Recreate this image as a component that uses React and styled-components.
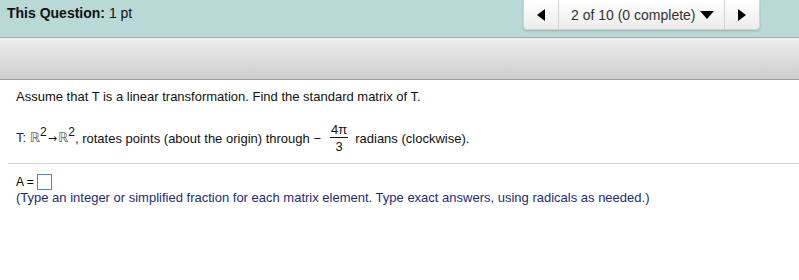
import React from 'react';
import styled, { createGlobalStyle } from 'styled-components';

const GlobalStyle = createGlobalStyle`
  body {
    margin: 0;
    background: #fff;
    font-family: "Liberation Sans", Arial, sans-serif;
    color: #000;
  }
`;

const Header = styled.div`
  height: 37px;
  background: #b9d9d6;
  border-bottom: 1px solid #a3a9a8;
  display: flex;
  justify-content: space-between;
  align-items: flex-start;
  padding: 0 39px 0 7px;
`;

const Title = styled.div`
  padding-top: 5px;
  font-size: 14px;
  line-height: 17px;
  color: #111;

  b {
    font-weight: bold;
  }
`;

const Nav = styled.div`
  display: flex;
  height: 29px;
  border: 1px solid #cfd3d3;
  border-top: none;
  border-radius: 0 0 4px 4px;
  box-shadow: 0 1px 2px rgba(0, 0, 0, 0.18);
  background: linear-gradient(#ffffff, #ececec);
  overflow: hidden;
`;

const NavButton = styled.div`
  width: ${p => p.$w}px;
  display: flex;
  align-items: center;
  justify-content: ${p => (p.$center ? 'center' : 'flex-start')};
  padding-left: ${p => (p.$center ? 0 : 12)}px;
  box-sizing: border-box;
  border-left: ${p => (p.$divided ? '1px solid #d3d3d3' : 'none')};
  border-right: ${p => (p.$divided ? '1px solid #d3d3d3' : 'none')};
  font-size: 14px;
  color: #333;
  gap: 4px;
`;

const Arrow = styled.span`
  width: 0;
  height: 0;
  border-top: 6px solid transparent;
  border-bottom: 6px solid transparent;
  ${p => (p.$dir === 'left' ? 'border-right: 8px solid #000;' : 'border-left: 8px solid #000;')}
`;

const Caret = styled.span`
  width: 0;
  height: 0;
  border-left: 7px solid transparent;
  border-right: 7px solid transparent;
  border-top: 8px solid #000;
`;

const Toolbar = styled.div`
  height: 41px;
  background: linear-gradient(#efefef, #cdcdcd);
  border-bottom: 1px solid #9c9c9c;
`;

const Content = styled.div`
  padding-left: 8px;
`;

const Question = styled.div`
  padding: 9px 8px 9px 8px;
  font-size: 13px;
  color: #111;
`;

const Line = styled.p`
  margin: 0;
  margin-top: ${p => p.$top || 0}px;
  line-height: 16px;
  display: flex;
  align-items: center;
  white-space: pre;
`;

const MathExpr = styled.span`
  display: inline-block;
  white-space: pre;
`;

const MathT = styled.span`
  color: #1e2a52;
`;

const Reals = styled.span`
  font-family: "DejaVu Sans", sans-serif;
  font-size: 13px;
  color: #666;
`;

const Sup = styled.span`
  font-size: 12px;
  position: relative;
  top: -6px;
`;

const ArrowGlyph = styled.span`
  font-family: "DejaVu Sans", sans-serif;
  font-size: 11px;
  margin: 0 1px;
`;

const Minus = styled.span`
  margin-right: 9px;
`;

const Fraction = styled.span`
  display: inline-flex;
  flex-direction: column;
  align-items: center;
  margin-right: 7px;
`;

const Num = styled.span`
  line-height: 14px;
  padding: 0 1px;
  border-bottom: 1px solid #111;
`;

const Den = styled.span`
  line-height: 14px;
  padding-top: 2px;
`;

const Rule = styled.div`
  height: 1px;
  background: #d6d6d6;
`;

const Answer = styled.div`
  padding: 9px 8px 0 8px;
  font-size: 13px;
`;

const AnswerRow = styled.div`
  display: flex;
  align-items: center;
  height: 17px;
  gap: 3px;
  font-size: 12px;
`;

const Box = styled.span`
  width: 13px;
  height: 14px;
  border: 1.5px solid #4a86d8;
`;

const Help = styled.div`
  line-height: 15px;
  color: #1c2c7a;
`;

export default function App() {
  return (
    <>
      <GlobalStyle />
      <Header>
        <Title>
          <b>This Question:</b> 1 pt
        </Title>
        <Nav>
          <NavButton $w={34} $center>
            <Arrow $dir="left" />
          </NavButton>
          <NavButton $w={167} $divided>
            2 of 10 (0 complete) <Caret />
          </NavButton>
          <NavButton $w={34} $center>
            <Arrow $dir="right" />
          </NavButton>
        </Nav>
      </Header>
      <Toolbar />
      <Content>
        <Question>
          <Line>Assume that T is a linear transformation. Find the standard matrix of T.</Line>
          <Line $top={18}>
            <MathExpr>
              <MathT>T: </MathT>
              <Reals>ℝ</Reals>
              <Sup>2</Sup>
              <ArrowGlyph>→</ArrowGlyph>
              <Reals>ℝ</Reals>
              <Sup>2</Sup>
            </MathExpr>
            {', rotates points (about the origin) through '}
            <Minus>−</Minus>
            <Fraction>
              <Num>4π</Num>
              <Den>3</Den>
            </Fraction>
            radians (clockwise).
          </Line>
        </Question>
        <Rule />
        <Answer>
          <AnswerRow>
            A = <Box />
          </AnswerRow>
          <Help>
            (Type an integer or simplified fraction for each matrix element. Type exact answers, using radicals as needed.)
          </Help>
        </Answer>
      </Content>
    </>
  );
}
